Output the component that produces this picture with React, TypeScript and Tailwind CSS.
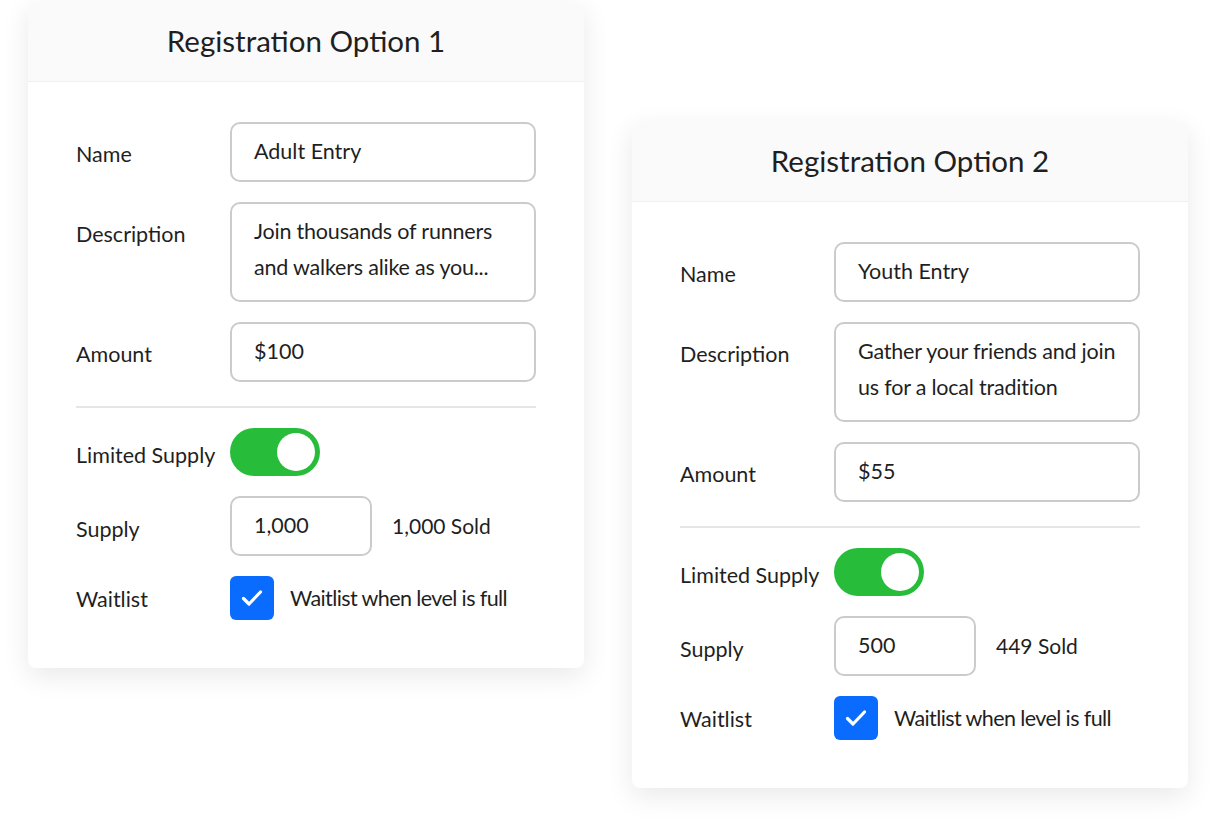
import React from 'react'

interface Option {
  title: string
  name: string
  description: string[]
  amount: string
  supply: string
  sold: string
}

const options: Option[] = [
  {
    title: 'Registration Option 1',
    name: 'Adult Entry',
    description: ['Join thousands of runners', 'and walkers alike as you...'],
    amount: '$100',
    supply: '1,000',
    sold: '1,000 Sold',
  },
  {
    title: 'Registration Option 2',
    name: 'Youth Entry',
    description: ['Gather your friends and join', 'us for a local tradition'],
    amount: '$55',
    supply: '500',
    sold: '449 Sold',
  },
]

const Label = ({ children }: { children: React.ReactNode }) => (
  <div className="w-[154px] shrink-0 text-[21.5px] leading-[28px] text-[#1f1f1f]">
    {children}
  </div>
)

const Field = ({ className, children }: { className: string; children: React.ReactNode }) => (
  <div
    className={`whitespace-nowrap rounded-[10px] border-2 border-[#cbcbcb] bg-white pl-[22px] pt-[9px] text-[21.5px] leading-[36px] text-[#1f1f1f] ${className}`}
  >
    {children}
  </div>
)

const OptionCard = ({ option }: { option: Option }) => (
  <div className="w-[556px] overflow-hidden rounded-[8px] bg-white shadow-[0_8px_28px_rgba(0,0,0,0.09)]">
    {/* Header */}
    <div className="flex h-[80px] items-center justify-center border-b border-[#f0f0f0] bg-[#fafafa]">
      <h2 className="text-[29.5px] text-[#1f1f1f]">{option.title}</h2>
    </div>

    {/* Form rows */}
    <div className="flex flex-col px-[48px] pt-[40px] pb-[48px]">
      <div className="flex flex-col gap-[20px]">
        <div className="flex items-start">
          <div className="pt-[18px]">
            <Label>Name</Label>
          </div>
          <Field className="h-[60px] w-[306px]">{option.name}</Field>
        </div>
        <div className="flex items-start">
          <div className="pt-[18px]">
            <Label>Description</Label>
          </div>
          <Field className="h-[100px] w-[306px] tracking-[-0.2px]">
            {option.description.map((line) => (
              <div key={line}>{line}</div>
            ))}
          </Field>
        </div>
        <div className="flex items-start">
          <div className="pt-[18px]">
            <Label>Amount</Label>
          </div>
          <Field className="h-[60px] w-[306px]">{option.amount}</Field>
        </div>
      </div>

      <div className="mt-[24px] mb-[20px] h-[2px] w-[460px] bg-[#e6e6e6]" />

      <div className="flex flex-col gap-[20px]">
        <div className="flex items-center">
          <div className="pt-[5px]">
            <Label>Limited Supply</Label>
          </div>
          {/* Toggle */}
          <div className="flex h-[48px] w-[90px] items-center justify-end rounded-full bg-[#27bd3b] pr-[5px]">
            <div className="size-[38px] rounded-full bg-white" />
          </div>
        </div>
        <div className="flex items-center">
          <div className="pt-[5px]">
            <Label>Supply</Label>
          </div>
          <Field className="h-[60px] w-[142px]">{option.supply}</Field>
          <span className="ml-[20px] text-[21px] leading-[36px] text-[#1f1f1f]">{option.sold}</span>
        </div>
        <div className="flex items-center">
          <div className="pt-[1px]">
            <Label>Waitlist</Label>
          </div>
          {/* Checkbox */}
          <div className="flex size-[44px] items-center justify-center rounded-[6px] bg-[#0a6cff]">
            <svg width="22" height="18" viewBox="0 0 22 18" fill="none">
              <path d="M2.5 9.5l5.5 5.5L19.5 3" stroke="white" strokeWidth="3.2" strokeLinecap="round" strokeLinejoin="round" />
            </svg>
          </div>
          <span className="ml-[16px] text-[21.5px] leading-[28px] tracking-[-0.6px] text-[#1f1f1f]">
            Waitlist when level is full
          </span>
        </div>
      </div>
    </div>
  </div>
)

export default function App() {
  return (
    <div
      className="flex h-[836px] w-[1216px] items-start gap-[48px] bg-white pt-[2px] pl-[28px]"
      style={{ fontFamily: 'Lato, "Noto Sans", sans-serif' }}
    >
      <OptionCard option={options[0]} />
      <div className="mt-[120px]">
        <OptionCard option={options[1]} />
      </div>
    </div>
  )
}
